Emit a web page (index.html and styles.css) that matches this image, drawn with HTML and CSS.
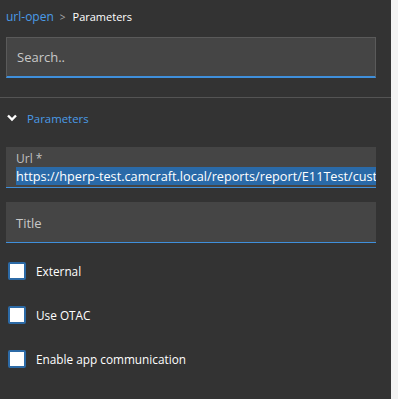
FILE: index.html
```html
<!DOCTYPE html>
<html>
<head>
<meta charset="utf-8">
<link rel="stylesheet" href="styles.css">
</head>
<body>
<div class="layout">
  <div class="panel">
    <div class="crumbs">
      <span class="crumb-link">url-open</span>
      <span class="crumb-sep">&gt;</span>
      <span class="crumb-cur">Parameters</span>
    </div>
    <div class="search">Search..</div>
    <div class="divider"></div>
    <div class="section-head">
      <svg class="chev" width="10" height="8" viewBox="0 0 10 8"><path d="M1 1.5 L5 5.5 L9 1.5" fill="none" stroke="#ffffff" stroke-width="2.4"/></svg>
      <span class="section-title">Parameters</span>
    </div>
    <div class="field field-url">
      <div class="field-label">Url *</div>
      <div class="field-value"><span class="sel">https://hperp-test.camcraft.local/reports/report/E11Test/customer</span></div>
    </div>
    <div class="field field-title">
      <div class="field-placeholder">Title</div>
    </div>
    <div class="checks">
      <label class="check"><span class="box"></span><span class="check-label">External</span></label>
      <label class="check"><span class="box"></span><span class="check-label">Use OTAC</span></label>
      <label class="check"><span class="box"></span><span class="check-label">Enable app communication</span></label>
    </div>
  </div>
  <div class="strip"></div>
</div>
</body>
</html>
```
FILE: styles.css
```css
html, body {
  margin: 0;
  padding: 0;
  height: 100%;
}
body {
  font-family: "Open Sans", "Noto Sans", sans-serif;
  font-size: 12px;
  color: #ffffff;
  background: #333333;
}
.layout {
  display: flex;
  height: 399px;
}
.panel {
  width: 391px;
  background: #333333;
  overflow: hidden;
}
.strip {
  flex: 1;
  background: #f3f3f3;
}
.crumbs {
  height: 33px;
  padding-left: 6px;
  display: flex;
  align-items: center;
}
.crumb-link { color: #4a9be8; }
.crumb-sep { color: #aaaaaa; font-size: 10px; margin: 0 7px 0 6px; }
.crumb-cur { color: #ffffff; font-size: 11px; }
.search {
  margin: 4px 0 0 6px;
  height: 38px;
  box-sizing: content-box;
  background: #454545;
  border: 1px solid #5a5a5a;
  border-bottom: 2px solid #3f8fdb;
  display: flex;
  align-items: center;
  padding-left: 10px;
  width: 358px;
  color: #c8c8c8;
  font-size: 13px;
}
.divider {
  margin-top: 19px;
  height: 1px;
  background: #545454;
}
.section-head {
  height: 38px;
  display: flex;
  align-items: center;
  padding-left: 7px;
  gap: 10px;
  margin-top: 1px;
}
.section-title { color: #4a9be8; font-size: 11.4px; }
.field {
  margin-left: 6px;
  width: 370px;
  background: #454545;
  border-bottom: 1px solid #3f8fdb;
  box-sizing: border-box;
}
.field-url {
  margin-top: 10px;
  height: 41px;
  padding: 5px 0 0 10px;
}
.field-label {
  color: #c0c0c0;
  font-size: 12px;
  line-height: 14px;
}
.field-value {
  white-space: nowrap;
  overflow: hidden;
  font-size: 12.7px;
  line-height: 20px;
}
.sel {
  background: #2a6aa8;
  color: #ffffff;
}
.field-title {
  margin-top: 14px;
  height: 41px;
  padding-left: 10px;
  display: flex;
  align-items: center;
  padding-top: 2px;
}
.field-placeholder {
  color: #c8c8c8;
  font-size: 13px;
}
.checks {
  display: flex;
  flex-direction: column;
  gap: 26px;
  margin-top: 19px;
  padding-left: 8px;
}
.check {
  display: flex;
  align-items: center;
  gap: 10px;
  height: 18px;
}
.box {
  width: 18px;
  height: 18px;
  box-sizing: border-box;
  background: #ffffff;
  border: 2px solid #2c6aa6;
  border-radius: 2px;
}
.check-label { color: #ffffff; font-size: 11.8px; }
```
